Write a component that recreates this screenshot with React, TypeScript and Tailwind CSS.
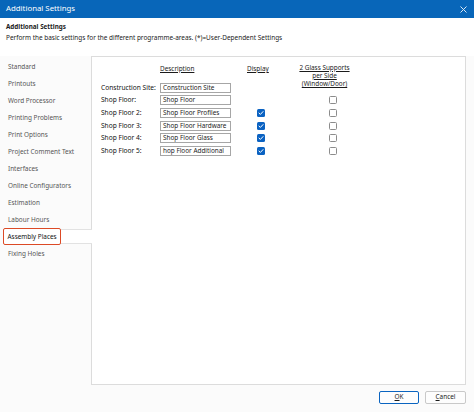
import React from "react";

const items = [
  "Standard",
  "Printouts",
  "Word Processor",
  "Printing Problems",
  "Print Options",
  "Project Comment Text",
  "Interfaces",
  "Online Configurators",
  "Estimation",
  "Labour Hours",
  "Assembly Places",
  "Fixing Holes",
];

type Row = { label: string; value: string; display: boolean | null; glass: boolean | null };

const rows: Row[] = [
  { label: "Construction Site:", value: "Construction Site", display: null, glass: null },
  { label: "Shop Floor:", value: "Shop Floor", display: null, glass: false },
  { label: "Shop Floor 2:", value: "Shop Floor Profiles", display: true, glass: false },
  { label: "Shop Floor 3:", value: "Shop Floor Hardware", display: true, glass: false },
  { label: "Shop Floor 4:", value: "Shop Floor Glass", display: true, glass: false },
  { label: "Shop Floor 5:", value: "hop Floor Additional", display: true, glass: false },
];

function Checked() {
  return (
    <div className="w-[8px] h-[8px] rounded-[1.5px] bg-[#0a62c2] flex items-center justify-center">
      <svg width="6" height="6" viewBox="0 0 6 6">
        <path d="M1 3.1 L2.4 4.4 L5 1.6" stroke="white" strokeWidth="1" fill="none" strokeLinecap="round" strokeLinejoin="round" />
      </svg>
    </div>
  );
}

function Unchecked() {
  return <div className="w-[8px] h-[8px] rounded-[1.5px] border border-[#8c8c8c] bg-white" />;
}

export default function App() {
  return (
    <div className="w-[474px] h-[412px] bg-[#fbfbfb] flex flex-col overflow-hidden font-['Noto_Sans',sans-serif] text-[#1b1b1b]">
      {/* title bar */}
      <div className="h-[18px] bg-[#0866b9] flex items-center justify-between pl-[6px] pr-[7px] text-white text-[7.8px] leading-none">
        <span>Additional Settings</span>
        <svg width="7" height="7" viewBox="0 0 7 7">
          <path d="M0.5 0.5 L6.5 6.5 M6.5 0.5 L0.5 6.5" stroke="#dbe8f5" strokeWidth="1" />
        </svg>
      </div>

      {/* header */}
      <div className="h-[38px] px-[6px] pt-[4px] bg-white">
        <div className="text-[6.3px] font-bold leading-[9px]">Additional Settings</div>
        <div className="text-[6.45px] leading-[9px] mt-[2px]">
          Perform the basic settings for the different programme-areas. (*)=User-Dependent Settings
        </div>
      </div>

      {/* body */}
      <div className="flex-1 flex pr-[8px]">
        <div className="w-[91px] pt-[2px] relative z-10 flex flex-col">
          {items.map((it) =>
            it === "Assembly Places" ? (
              <div key={it} className="h-[17px] flex items-stretch">
                <div className="ml-[3px] border-[1.5px] border-[#dc4a26] rounded-[2px] px-[3.5px] flex items-center bg-white text-[6.4px] text-[#111]">
                  {it}
                </div>
                <div className="flex-1 -mr-[1px] my-[1px] border-y border-[#e2e2e2] bg-white" />
              </div>
            ) : (
              <div key={it} className="h-[17px] flex items-center pl-[8px] text-[6.4px] text-[#555]">
                {it}
              </div>
            )
          )}
        </div>

        <div className="flex-1 border border-[#dcdcdc] bg-white pl-[9px] pt-[7px]">
          {/* header row */}
          <div className="flex h-[17.5px] text-[6.4px] leading-[8px]">
            <div className="w-[59px]" />
            <div className="w-[87px] underline pt-[1px]">Description</div>
            <div className="w-[50px] underline pt-[1px]">Display</div>
            <div className="w-[55px] text-center underline">
              2 Glass Supports
              <br />
              per Side
              <br />
              (Window/Door)
            </div>
          </div>
          {rows.map((r) => (
            <div key={r.label} className="flex items-center h-[12.6px] text-[6.4px]">
              <div className="w-[59px] text-[6.6px] text-[#111]">{r.label}</div>
              <div className="w-[87px]">
                <div className="w-[71px] h-[10px] border border-[#a6a6a6] bg-white px-[2px] leading-[8px] overflow-hidden whitespace-nowrap">
                  {r.value}
                </div>
              </div>
              <div className="w-[50px] pl-[10px]">{r.display ? <Checked /> : null}</div>
              <div className="w-[55px] pl-[32px]">{r.glass === false ? <Unchecked /> : null}</div>
            </div>
          ))}
        </div>
      </div>

      {/* footer */}
      <div className="h-[27px] flex justify-end items-start pt-[6px] pr-[8px] gap-[6px] text-[6.4px]">
        <button className="w-[40px] h-[13px] rounded-[2px] border-[1.5px] border-[#0a64c0] bg-[#fdfdfd] flex items-center justify-center leading-none">
          <span>
            <span className="underline">O</span>K
          </span>
        </button>
        <button className="w-[41px] h-[13px] rounded-[2px] border border-[#c9c9c9] bg-[#fdfdfd] flex items-center justify-center leading-none">
          <span>
            <span className="underline">C</span>ancel
          </span>
        </button>
      </div>
    </div>
  );
}
